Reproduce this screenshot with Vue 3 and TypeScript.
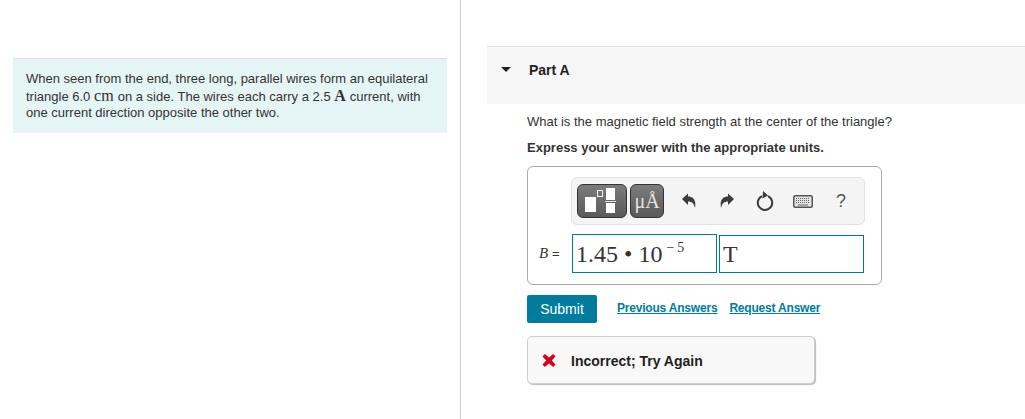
<script setup lang="ts">
const toolIcons = [
  { id: 'undo', d: 'M0 6 L6 0.500 L6 3.500 C11 3.500 14.500 7 13 15 C12 10.500 10 8.500 6 8.500 L6 12 Z' },
  { id: 'redo', d: 'M14 6 L8 0.500 L8 3.500 C3 3.500 -0.500 7 1 15 C2 10.500 4 8.500 8 8.500 L8 12 Z' },
]
</script>

<template>
  <div class="page">
    <section class="intro">
      <div class="intro-box">
        When seen from the end, three long, parallel wires form an equilateral
        triangle 6.0 <span class="unit">cm</span> on a side. The wires each carry a 2.5
        <span class="unit bold">A</span> current, with one current direction opposite the other two.
      </div>
    </section>

    <section class="part">
      <header class="part-head">
        <span class="caret"></span>
        <h2>Part A</h2>
      </header>

      <div class="part-body">
        <p class="question">What is the magnetic field strength at the center of the triangle?</p>
        <p class="instruction">Express your answer with the appropriate units.</p>

        <div class="answer-box">
          <div class="toolbar">
            <button class="tpl tpl-wide" type="button">
              <svg width="48" height="32" viewBox="0 0 48 32">
                <rect x="7" y="12" width="11" height="15" fill="#fff" />
                <rect x="19.500" y="5.500" width="5" height="6" fill="none" stroke="#f2f2f2" />
                <rect x="28" y="3" width="9" height="12" fill="#fff" />
                <rect x="27" y="16" width="11" height="1" fill="#e4e4e4" />
                <rect x="28" y="18" width="9" height="10" fill="#fff" />
              </svg>
            </button>
            <button class="tpl tpl-unit" type="button">μÅ</button>
            <div class="tools">
              <svg v-for="icon in toolIcons" :key="icon.id" width="14" height="16" viewBox="0 0 14 16">
                <path :d="icon.d" fill="#3c3c3c" />
              </svg>
              <svg width="18" height="21" viewBox="0 1 18 21">
                <path d="M6 6.200 A7.200 7.200 0 1 0 12 6.200" fill="none" stroke="#3c3c3c" stroke-width="2" />
                <path d="M7 1 L12 5.500 L6.500 8.500 Z" fill="#3c3c3c" />
              </svg>
              <svg width="20" height="13" viewBox="0 0 20 13">
                <rect x="0.750" y="0.750" width="18.500" height="11.500" rx="1.500" fill="#e4e4e4" stroke="#555" stroke-width="1.500" />
                <path d="M3 3.500 H17 M3 5.500 H17 M3 7.500 H17" stroke="#666" stroke-dasharray="1 1" />
                <path d="M5 10 H15" stroke="#666" />
              </svg>
              <span class="help">?</span>
            </div>
          </div>

          <div class="answer-row">
            <span class="var"><i>B</i> <span class="eq">=</span></span>
            <div class="field field-value">1.45 • 10<sup>−5</sup></div>
            <div class="field field-unit">T</div>
          </div>
        </div>

        <div class="actions">
          <button class="submit" type="button">Submit</button>
          <a class="link" href="#">Previous Answers</a>
          <a class="link" href="#">Request Answer</a>
        </div>

        <div class="feedback">
          <svg width="14" height="13" viewBox="0 0 14 13">
            <path d="M0.500 2.500 L2.800 0 L7 3.600 L11.200 0 L13.500 2.500 L9.800 6.500 L13.500 10.500 L11.200 13 L7 9.400 L2.800 13 L0.500 10.500 L4.200 6.500 Z" fill="#d6001c" />
          </svg>
          <span class="feedback-text">Incorrect; Try Again</span>
        </div>
      </div>
    </section>
  </div>
</template>

<style>
html, body {
  margin: 0;
  background: #fff;
}
</style>

<style scoped>
.page {
  display: flex;
  height: 419px;
  overflow: hidden;
  font-family: "Liberation Sans", Arial, sans-serif;
  font-size: 13px;
  color: #333;
}
.intro {
  box-sizing: border-box;
  width: 461px;
  flex: none;
  padding: 58px 13px 0;
  border-right: 1px solid #c5d3e0;
}
.intro-box {
  box-sizing: border-box;
  width: 434px;
  height: 75px;
  padding: 12px 13px 0;
  background: #e5f5f6;
  border-top: 1px solid #dfe3e5;
  line-height: 16.500px;
}
.unit {
  font-family: "Liberation Serif", serif;
  font-size: 16px;
  letter-spacing: 0.300px;
  line-height: 1;
}
.bold {
  font-weight: 700;
}
.part {
  flex: 1;
  padding: 46px 0 0 26px;
}
.part-head {
  display: flex;
  height: 58px;
  box-sizing: border-box;
  padding: 15px 0 0 14px;
  background: #f7f7f7;
  border-top: 1px solid #e2e2e2;
}
.caret {
  width: 0;
  height: 0;
  margin: 5px 18px 0 0;
  border-left: 5.500px solid transparent;
  border-right: 5.500px solid transparent;
  border-top: 5px solid #222;
}
h2 {
  margin: 0;
  font-size: 14px;
  line-height: 16px;
  font-weight: 700;
  color: #222;
}
.part-body {
  padding: 10px 0 0 40px;
}
.question {
  margin: 0;
  line-height: 16px;
}
.instruction {
  margin: 10px 0 0;
  line-height: 16px;
  font-weight: 700;
}
.answer-box {
  box-sizing: border-box;
  width: 355px;
  height: 119px;
  margin-top: 10px;
  padding: 10px 17px 0 14px;
  border: 1px solid #aaa;
  border-radius: 6px;
}
.toolbar {
  display: flex;
  box-sizing: border-box;
  width: 294px;
  height: 48px;
  margin-left: 29px;
  padding: 6px 0 0 5px;
  gap: 3px;
  background: #f4f4f4;
  border: 1px solid #e2e2e2;
  border-radius: 6px;
}
.tpl {
  display: flex;
  align-items: center;
  justify-content: center;
  box-sizing: border-box;
  height: 34px;
  padding: 0;
  border: 1px solid #333;
  border-radius: 6px;
  background: linear-gradient(#7c7c7c, #5a5a5a);
}
.tpl-wide {
  width: 50px;
}
.tpl-unit {
  width: 34px;
  color: #e6e6e6;
  font-family: "Liberation Serif", serif;
  font-size: 20px;
}
.tools {
  display: grid;
  grid-template-columns: repeat(5, 38px);
  justify-items: center;
  align-items: center;
  height: 34px;
  margin-left: 3px;
}
.help {
  font-family: "Liberation Sans", sans-serif;
  font-size: 18px;
  color: #555;
}
.answer-row {
  display: flex;
  align-items: flex-end;
  gap: 2px;
  margin-top: 9px;
}
.var {
  align-self: center;
  width: 31px;
  margin-left: -3px;
  font-family: "Liberation Serif", serif;
  font-size: 15px;
  color: #333;
}
.eq {
  font-family: "Liberation Sans", sans-serif;
  font-size: 13px;
}
.field {
  box-sizing: border-box;
  width: 145px;
  border: 1px solid #007a9b;
  font-family: "Liberation Serif", serif;
  font-size: 24px;
  line-height: 30px;
  color: #333;
}
.field-value {
  height: 39px;
  padding: 4px 0 0 3px;
}
.field-value sup {
  font-size: 14px;
  line-height: 0;
  vertical-align: 10px;
  letter-spacing: 3px;
  margin-left: 4px;
}
.field-unit {
  height: 38px;
  padding: 3px 0 0 3px;
}
.actions {
  display: flex;
  align-items: center;
  margin-top: 10px;
}
.submit {
  box-sizing: border-box;
  width: 70px;
  height: 28px;
  padding: 0;
  border: 0;
  border-radius: 2px;
  background: #007c9e;
  color: #fff;
  font: 14px "Liberation Sans", Arial, sans-serif;
}
.link {
  margin: -2px 0 0 20px;
  color: #007c9e;
  font-size: 12px;
  font-weight: 700;
  letter-spacing: -0.200px;
  line-height: 14px;
}
.link + .link {
  margin-left: 12px;
}
.feedback {
  display: flex;
  align-items: center;
  gap: 15px;
  box-sizing: border-box;
  width: 288px;
  height: 48px;
  margin-top: 13px;
  padding-left: 14px;
  background: #f8f8f8;
  border: 1px solid #ccc;
  border-radius: 5px;
  box-shadow: 1px 1px 1px #bbb;
  font-size: 14px;
  font-weight: 700;
  color: #222;
}
.feedback-text {
  margin-top: 2px;
}
</style>
